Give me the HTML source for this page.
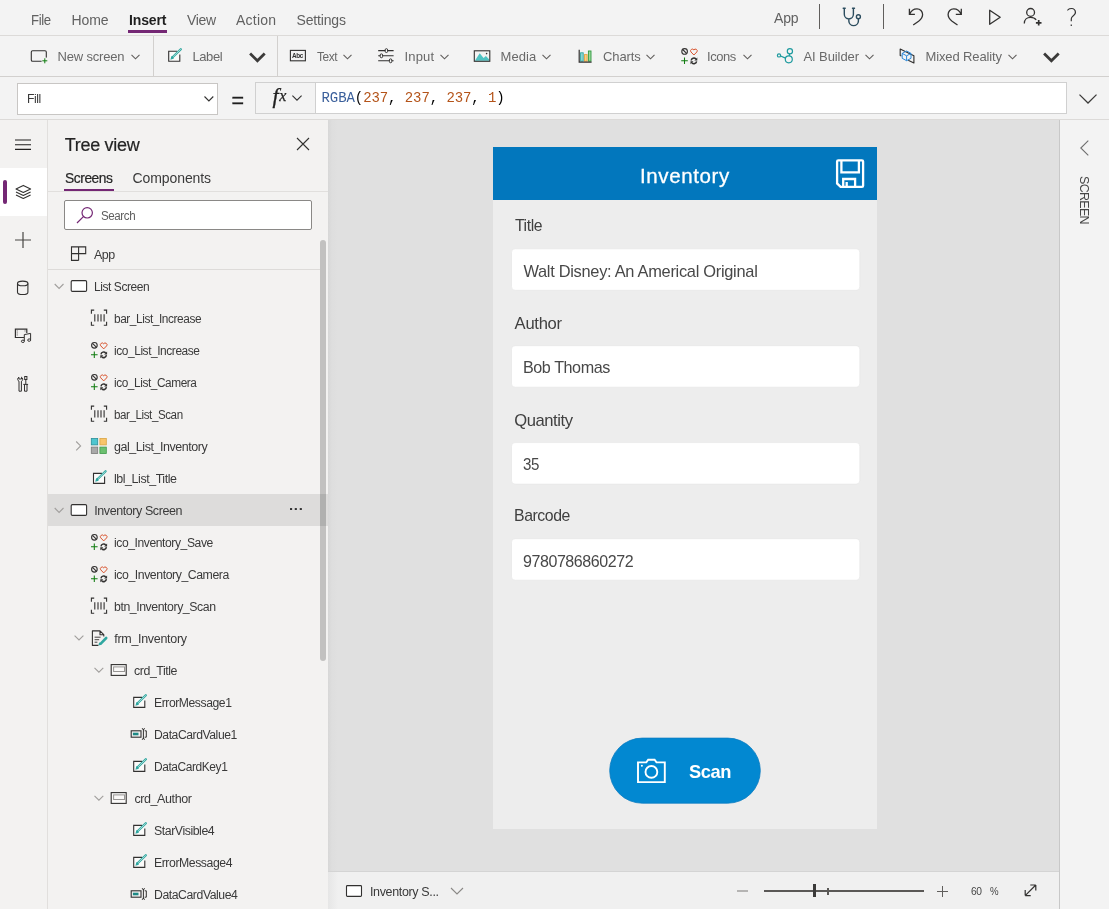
<!DOCTYPE html>
<html lang="en"><head><meta charset="utf-8"><title>Power Apps - Inventory</title>
<style>
html,body{margin:0;padding:0;}
body{width:1109px;height:909px;overflow:hidden;position:relative;background:#f3f2f1;font-family:"Liberation Sans",sans-serif;}
.t{position:absolute;white-space:nowrap;line-height:20px;filter:grayscale(1);}
.tc{filter:contrast(1.001);}
#txt{position:absolute;left:0;top:0;width:1109px;height:909px;}
.r{position:absolute;box-sizing:border-box;}
svg{overflow:visible;}
</style></head>
<body>
<div class="r" style="left:0px;top:0px;width:1109px;height:120px;background:#f3f3f3;"></div>
<div class="r" style="left:0px;top:35px;width:1109px;height:1px;background:#dcdad8;"></div>
<div class="r" style="left:0px;top:76px;width:1109px;height:1px;background:#d2d0ce;"></div>
<div class="r" style="left:0px;top:119px;width:1109px;height:1px;background:#dcdad8;"></div>
<div class="r" style="left:328px;top:120px;width:731px;height:752px;background:#e0e0e0;"></div>
<div class="r" style="left:328px;top:120px;width:10px;height:752px;background:linear-gradient(90deg,#d7d7d7,#dedede 40%,#e0e0e0);"></div>
<div class="r" style="left:1059px;top:120px;width:50px;height:789px;background:#f3f3f3;border-left:1px solid #c8c8c8;"></div>
<div class="r" style="left:328px;top:871px;width:731px;height:38px;background:#f0f0f0;border-top:1px solid #d4d4d4;"></div>
<div class="r" style="left:328px;top:872px;width:10px;height:37px;background:linear-gradient(90deg,#e6e6e6,#f0f0f0);"></div>
<div class="r" style="left:0px;top:120px;width:48px;height:789px;background:#f3f2f1;border-right:1px solid #e1dfdd;"></div>
<div class="r" style="left:48px;top:120px;width:280px;height:789px;background:#f3f2f1;"></div>
<span class="t" id="t1" style="left:30.50px;top:9.85px;font-size:14px;color:#63615f;letter-spacing:-0.450px;transform:scaleX(0.9428);transform-origin:0 50%;">File</span>
<span class="t" id="t2" style="left:71.50px;top:9.85px;font-size:14px;color:#63615f;letter-spacing:-0.120px;">Home</span>
<span class="t" id="t3" style="left:129.00px;top:9.85px;font-size:14px;color:#201f1e;font-weight:700;letter-spacing:-0.125px;">Insert</span>
<span class="t" id="t4" style="left:187.00px;top:9.85px;font-size:14px;color:#63615f;letter-spacing:-0.365px;">View</span>
<span class="t" id="t5" style="left:236.00px;top:9.85px;font-size:14px;color:#63615f;letter-spacing:0.216px;">Action</span>
<span class="t" id="t6" style="left:296.50px;top:9.85px;font-size:14px;color:#63615f;letter-spacing:-0.156px;">Settings</span>
<div class="r" style="left:128px;top:30px;width:39px;height:3px;background:#742774;"></div>
<span class="t" id="t7" style="left:774.00px;top:8.05px;font-size:14px;color:#63615f;letter-spacing:-0.211px;">App</span>
<span class="t" id="t8" style="left:1065.60px;top:7.70px;font-size:24px;color:#323130;font-weight:200;font-family:'DejaVu Sans', sans-serif;">?</span>
<span class="t" id="t9" style="left:292.30px;top:45.97px;font-size:7px;color:#323130;font-weight:700;letter-spacing:-0.450px;transform:scaleX(0.9080);transform-origin:0 50%;">Abc</span>
<div class="r" style="left:819px;top:4px;width:1px;height:25px;background:#605e5c;"></div>
<div class="r" style="left:883px;top:4px;width:1px;height:25px;background:#605e5c;"></div>
<span class="t" id="t10" style="left:57.60px;top:46.50px;font-size:13px;color:#6b6967;letter-spacing:-0.182px;">New screen</span>
<svg class="r" style="left:130.5px;top:54px;" width="9" height="6" viewBox="0 0 9 6" fill="none"><path d="M0.5 0.8 L4.5 4.8 L8.5 0.8" stroke="#605e5c" stroke-width="1.1"/></svg>
<span class="t" id="t11" style="left:192.40px;top:46.50px;font-size:13px;color:#6b6967;letter-spacing:-0.378px;">Label</span>
<span class="t" id="t12" style="left:317.00px;top:46.50px;font-size:13px;color:#6b6967;letter-spacing:-0.450px;transform:scaleX(0.9158);transform-origin:0 50%;">Text</span>
<svg class="r" style="left:343.3px;top:54px;" width="9" height="6" viewBox="0 0 9 6" fill="none"><path d="M0.5 0.8 L4.5 4.8 L8.5 0.8" stroke="#605e5c" stroke-width="1.1"/></svg>
<span class="t" id="t13" style="left:404.50px;top:46.50px;font-size:13px;color:#6b6967;letter-spacing:0.145px;">Input</span>
<svg class="r" style="left:439.8px;top:54px;" width="9" height="6" viewBox="0 0 9 6" fill="none"><path d="M0.5 0.8 L4.5 4.8 L8.5 0.8" stroke="#605e5c" stroke-width="1.1"/></svg>
<span class="t" id="t14" style="left:500.50px;top:46.50px;font-size:13px;color:#6b6967;letter-spacing:0.095px;">Media</span>
<svg class="r" style="left:542.3px;top:54px;" width="9" height="6" viewBox="0 0 9 6" fill="none"><path d="M0.5 0.8 L4.5 4.8 L8.5 0.8" stroke="#605e5c" stroke-width="1.1"/></svg>
<span class="t" id="t15" style="left:603.00px;top:46.50px;font-size:13px;color:#6b6967;letter-spacing:-0.119px;">Charts</span>
<svg class="r" style="left:646.3px;top:54px;" width="9" height="6" viewBox="0 0 9 6" fill="none"><path d="M0.5 0.8 L4.5 4.8 L8.5 0.8" stroke="#605e5c" stroke-width="1.1"/></svg>
<span class="t" id="t16" style="left:707.30px;top:46.50px;font-size:13px;color:#6b6967;letter-spacing:-0.450px;transform:scaleX(0.9973);transform-origin:0 50%;">Icons</span>
<svg class="r" style="left:742.8px;top:54px;" width="9" height="6" viewBox="0 0 9 6" fill="none"><path d="M0.5 0.8 L4.5 4.8 L8.5 0.8" stroke="#605e5c" stroke-width="1.1"/></svg>
<span class="t" id="t17" style="left:803.50px;top:46.50px;font-size:13px;color:#6b6967;letter-spacing:-0.097px;">AI Builder</span>
<svg class="r" style="left:864.5px;top:54px;" width="9" height="6" viewBox="0 0 9 6" fill="none"><path d="M0.5 0.8 L4.5 4.8 L8.5 0.8" stroke="#605e5c" stroke-width="1.1"/></svg>
<span class="t" id="t18" style="left:925.50px;top:46.50px;font-size:13px;color:#6b6967;letter-spacing:-0.128px;">Mixed Reality</span>
<svg class="r" style="left:1007.5px;top:54px;" width="9" height="6" viewBox="0 0 9 6" fill="none"><path d="M0.5 0.8 L4.5 4.8 L8.5 0.8" stroke="#605e5c" stroke-width="1.1"/></svg>
<div class="r" style="left:153px;top:36px;width:1px;height:40px;background:#d2d0ce;"></div>
<div class="r" style="left:277px;top:36px;width:1px;height:40px;background:#d2d0ce;"></div>
<svg class="r" style="left:248.5px;top:51.5px;" width="17" height="11" viewBox="0 0 17 11" fill="none"><path d="M1.1 1.6 L8.4 8.7 L15.7 1.6" stroke="#3b3a39" stroke-width="2.8"/></svg>
<svg class="r" style="left:1042.6px;top:51.5px;" width="17" height="11" viewBox="0 0 17 11" fill="none"><path d="M1.1 1.6 L8.4 8.7 L15.7 1.6" stroke="#3b3a39" stroke-width="2.8"/></svg>
<div class="r" style="left:17px;top:83px;width:201px;height:32px;background:#fff;border:1px solid #c8c6c4;"></div>
<span class="t" id="t19" style="left:26.60px;top:89.30px;font-size:13px;color:#3b3a39;letter-spacing:-0.450px;transform:scaleX(0.9371);transform-origin:0 50%;">Fill</span>
<svg class="r" style="left:204px;top:96px;" width="10" height="6" viewBox="0 0 10 6" fill="none"><path d="M0.5 0.5 L4.9 4.9 L9.3 0.5" stroke="#323130" stroke-width="1.1"/></svg>
<span class="t" id="t20" style="left:231.50px;top:90.75px;font-size:21.5px;color:#201f1e;-webkit-text-stroke:0.3px #201f1e;">=</span>
<div class="r" style="left:255px;top:82px;width:61px;height:32px;background:#f3f3f3;border:1px solid #d0d0d0;"></div>
<span class="t" style="left:272.6px;top:85.58px;font-size:22px;color:#201f1e;font-family:'Liberation Serif',serif;font-style:italic;-webkit-text-stroke:0.35px #201f1e;">f<span style="font-size:16px;position:relative;top:-1.5px;margin-left:0.6px;-webkit-text-stroke:0.25px #201f1e;">x</span></span>
<svg class="r" style="left:292px;top:95.4px;" width="10" height="6" viewBox="0 0 10 6" fill="none"><path d="M0.4 0.6 L5 5.2 L9.6 0.6" stroke="#323130" stroke-width="1.1"/></svg>
<div class="r" style="left:315px;top:82px;width:752px;height:32px;background:#fff;border:1px solid #d0d0d0;"></div>
<span class="t tc" style="left:321.5px;top:88.2px;font-size:14px;font-family:'Liberation Mono',monospace;letter-spacing:-0.08px;color:#000"><span style="color:#3a5f9b">RGBA</span>(<span style="color:#b4541a">237</span>, <span style="color:#b4541a">237</span>, <span style="color:#b4541a">237</span>, <span style="color:#b4541a">1</span>)</span>
<svg class="r" style="left:1079px;top:93.5px;" width="18" height="10" viewBox="0 0 18 10" fill="none"><path d="M0.5 0.6 L9 9 L17.5 0.6" stroke="#3b3a39" stroke-width="1.25"/></svg>
<div class="r" style="left:0px;top:168px;width:47px;height:48px;background:#fff;"></div>
<div class="r" style="left:3px;top:180px;width:4px;height:24px;background:#742774;border-radius:2px;"></div>
<svg class="r" style="left:15px;top:139px;" width="16" height="12" viewBox="0 0 16 12" fill="none"><path d="M0 1H16M0 5.7H16M0 10.4H16" stroke="#201f1e" stroke-width="1.1"/></svg>
<svg class="r" style="left:15px;top:232px;" width="16" height="16" viewBox="0 0 16 16" fill="none"><path d="M8 0V16M0 8H16" stroke="#484644" stroke-width="1.2"/></svg>
<span class="t" id="t21" style="left:64.70px;top:135.06px;font-size:18px;color:#252423;letter-spacing:-0.295px;-webkit-text-stroke:0.2px #252423;">Tree view</span>
<svg class="r" style="left:297px;top:138px;" width="12" height="12" viewBox="0 0 12 12" fill="none"><path d="M0 0L12 12M12 0L0 12" stroke="#323130" stroke-width="1.1"/></svg>
<span class="t" id="t22" style="left:64.70px;top:168.45px;font-size:14px;color:#252423;letter-spacing:-0.450px;transform:scaleX(0.9864);transform-origin:0 50%;-webkit-text-stroke:0.2px #252423;">Screens</span>
<span class="t" id="t23" style="left:132.50px;top:168.45px;font-size:14px;color:#3b3a39;letter-spacing:-0.088px;">Components</span>
<div class="r" style="left:48px;top:191px;width:280px;height:1px;background:#e1dfdd;"></div>
<div class="r" style="left:64px;top:189px;width:50px;height:2px;background:#742774;"></div>
<div class="r" style="left:64px;top:200px;width:248px;height:30px;background:#fff;border:1px solid #8a8886;border-radius:2px;"></div>
<svg class="r" style="left:76px;top:206px;" width="18" height="18" viewBox="0 0 18 18" fill="none"><circle cx="11.2" cy="6.8" r="5.2" stroke="#742774" stroke-width="1.2"/><path d="M7.4 10.6 L1 17" stroke="#742774" stroke-width="1.2"/></svg>
<span class="t" id="t24" style="left:101.00px;top:206.17px;font-size:12.5px;color:#605e5c;letter-spacing:-0.450px;transform:scaleX(0.9261);transform-origin:0 50%;">Search</span>
<div class="r" style="left:48px;top:269px;width:272px;height:1px;background:#dddbd9;"></div>
<div class="r" style="left:48px;top:494px;width:280px;height:32px;background:#dddcdb;"></div>
<div class="r" style="left:320px;top:240px;width:6px;height:421px;background:rgba(0,0,0,0.2);border-radius:3px;"></div>
<span class="t" id="t25" style="left:94.30px;top:245.27px;font-size:12.5px;color:#3b3a39;letter-spacing:-0.450px;transform:scaleX(0.9977);transform-origin:0 50%;">App</span>
<span class="t" id="t26" style="left:94.30px;top:277.27px;font-size:12.5px;color:#3b3a39;letter-spacing:-0.450px;transform:scaleX(0.9598);transform-origin:0 50%;">List Screen</span>
<span class="t" id="t27" style="left:114.30px;top:309.27px;font-size:12.5px;color:#3b3a39;letter-spacing:-0.450px;transform:scaleX(0.9493);transform-origin:0 50%;">bar_List_Increase</span>
<span class="t" id="t28" style="left:114.30px;top:341.27px;font-size:12.5px;color:#3b3a39;letter-spacing:-0.450px;transform:scaleX(0.9547);transform-origin:0 50%;">ico_List_Increase</span>
<span class="t" id="t29" style="left:114.30px;top:373.27px;font-size:12.5px;color:#3b3a39;letter-spacing:-0.450px;transform:scaleX(0.9475);transform-origin:0 50%;">ico_List_Camera</span>
<span class="t" id="t30" style="left:114.30px;top:405.27px;font-size:12.5px;color:#3b3a39;letter-spacing:-0.450px;transform:scaleX(0.9272);transform-origin:0 50%;">bar_List_Scan</span>
<span class="t" id="t31" style="left:114.30px;top:437.27px;font-size:12.5px;color:#3b3a39;letter-spacing:-0.450px;transform:scaleX(0.9989);transform-origin:0 50%;">gal_List_Inventory</span>
<span class="t" id="t32" style="left:114.30px;top:469.27px;font-size:12.5px;color:#3b3a39;letter-spacing:-0.450px;transform:scaleX(0.9958);transform-origin:0 50%;">lbl_List_Title</span>
<span class="t" id="t33" style="left:94.30px;top:501.27px;font-size:12.5px;color:#3b3a39;letter-spacing:-0.427px;">Inventory Screen</span>
<span class="t" id="t34" style="left:114.30px;top:533.27px;font-size:12.5px;color:#3b3a39;letter-spacing:-0.450px;transform:scaleX(0.9721);transform-origin:0 50%;">ico_Inventory_Save</span>
<span class="t" id="t35" style="left:114.30px;top:565.27px;font-size:12.5px;color:#3b3a39;letter-spacing:-0.450px;transform:scaleX(0.9837);transform-origin:0 50%;">ico_Inventory_Camera</span>
<span class="t" id="t36" style="left:114.30px;top:597.27px;font-size:12.5px;color:#3b3a39;letter-spacing:-0.450px;transform:scaleX(0.9850);transform-origin:0 50%;">btn_Inventory_Scan</span>
<span class="t" id="t37" style="left:114.30px;top:629.27px;font-size:12.5px;color:#3b3a39;letter-spacing:-0.310px;">frm_Inventory</span>
<span class="t" id="t38" style="left:134.40px;top:661.27px;font-size:12.5px;color:#3b3a39;letter-spacing:-0.450px;transform:scaleX(0.9916);transform-origin:0 50%;">crd_Title</span>
<span class="t" id="t39" style="left:154.20px;top:693.27px;font-size:12.5px;color:#3b3a39;letter-spacing:-0.450px;transform:scaleX(0.9731);transform-origin:0 50%;">ErrorMessage1</span>
<span class="t" id="t40" style="left:154.20px;top:725.27px;font-size:12.5px;color:#3b3a39;letter-spacing:-0.450px;transform:scaleX(0.9726);transform-origin:0 50%;">DataCardValue1</span>
<span class="t" id="t41" style="left:154.20px;top:757.27px;font-size:12.5px;color:#3b3a39;letter-spacing:-0.450px;transform:scaleX(0.9578);transform-origin:0 50%;">DataCardKey1</span>
<span class="t" id="t42" style="left:134.40px;top:789.27px;font-size:12.5px;color:#3b3a39;letter-spacing:-0.406px;">crd_Author</span>
<span class="t" id="t43" style="left:154.20px;top:821.27px;font-size:12.5px;color:#3b3a39;letter-spacing:-0.450px;transform:scaleX(0.9864);transform-origin:0 50%;">StarVisible4</span>
<span class="t" id="t44" style="left:154.20px;top:853.27px;font-size:12.5px;color:#3b3a39;letter-spacing:-0.450px;transform:scaleX(0.9806);transform-origin:0 50%;">ErrorMessage4</span>
<span class="t" id="t45" style="left:154.20px;top:885.27px;font-size:12.5px;color:#3b3a39;letter-spacing:-0.450px;transform:scaleX(0.9796);transform-origin:0 50%;">DataCardValue4</span>
<span class="t" id="t46" style="left:289.20px;top:495.50px;font-size:13px;color:#323130;font-weight:700;letter-spacing:0.600px;transform:scaleX(1.1458);transform-origin:0 50%;">...</span>
<div class="r" style="left:493px;top:147px;width:384px;height:682px;background:#ededed;"></div>
<div class="r" style="left:493px;top:147px;width:384px;height:53px;background:#0277bd;"></div>
<span class="t" id="t47" style="left:640.20px;top:165.50px;font-size:20.5px;color:#fff;letter-spacing:0.600px;transform:scaleX(1.0008);transform-origin:0 50%;-webkit-text-stroke:0.3px #fff;">Inventory</span>
<span class="t" id="t48" style="left:514.60px;top:216.35px;font-size:16.6px;color:#404040;letter-spacing:-0.450px;transform:scaleX(0.9504);transform-origin:0 50%;">Title</span>
<svg class="r" style="left:0px;top:0px;" width="1109" height="909" viewBox="0 0 1109 909" fill="none"><rect x="511.5" y="248.8" width="348.3" height="41.5" rx="3.6" fill="#fff" stroke="#e4e4e4" stroke-width="0.6"/></svg>
<span class="t" id="t49" style="left:523.40px;top:261.02px;font-size:16.4px;color:#484848;letter-spacing:-0.285px;">Walt Disney: An Americal Original</span>
<span class="t" id="t50" style="left:514.60px;top:313.65px;font-size:16.6px;color:#404040;letter-spacing:-0.278px;">Author</span>
<svg class="r" style="left:0px;top:0px;" width="1109" height="909" viewBox="0 0 1109 909" fill="none"><rect x="511.5" y="345.7" width="348.3" height="41.5" rx="3.6" fill="#fff" stroke="#e4e4e4" stroke-width="0.6"/></svg>
<span class="t" id="t51" style="left:522.60px;top:357.22px;font-size:16.4px;color:#484848;letter-spacing:-0.450px;transform:scaleX(0.9854);transform-origin:0 50%;">Bob Thomas</span>
<span class="t" id="t52" style="left:514.20px;top:410.55px;font-size:16.6px;color:#404040;letter-spacing:-0.430px;">Quantity</span>
<svg class="r" style="left:0px;top:0px;" width="1109" height="909" viewBox="0 0 1109 909" fill="none"><rect x="511.5" y="442.6" width="348.3" height="41.5" rx="3.6" fill="#fff" stroke="#e4e4e4" stroke-width="0.6"/></svg>
<span class="t" id="t53" style="left:522.60px;top:454.02px;font-size:16.4px;color:#484848;letter-spacing:-0.450px;transform:scaleX(0.9222);transform-origin:0 50%;">35</span>
<span class="t" id="t54" style="left:513.80px;top:506.35px;font-size:16.6px;color:#404040;letter-spacing:-0.450px;transform:scaleX(0.9541);transform-origin:0 50%;">Barcode</span>
<svg class="r" style="left:0px;top:0px;" width="1109" height="909" viewBox="0 0 1109 909" fill="none"><rect x="511.5" y="538.7" width="348.3" height="41.5" rx="3.6" fill="#fff" stroke="#e4e4e4" stroke-width="0.6"/></svg>
<span class="t" id="t55" style="left:522.80px;top:551.02px;font-size:16.4px;color:#484848;letter-spacing:-0.450px;transform:scaleX(0.9778);transform-origin:0 50%;">9780786860272</span>
<svg class="r" style="left:0px;top:0px;" width="1109" height="909" viewBox="0 0 1109 909" fill="none"><rect x="609.7" y="738.1" width="150.6" height="65.1" rx="32.55" fill="#0288d1" stroke="#0b7cc2" stroke-width="0.8"/></svg>
<span class="t" id="t56" style="left:688.60px;top:762.29px;font-size:18.5px;color:#fff;font-weight:700;letter-spacing:-0.450px;transform:scaleX(0.9891);transform-origin:0 50%;">Scan</span>
<span class="t" id="t57" style="left:370.00px;top:881.67px;font-size:12.5px;color:#3b3a39;letter-spacing:-0.358px;">Inventory S...</span>
<span class="t" id="t58" style="left:970.50px;top:880.99px;font-size:11px;color:#484644;letter-spacing:-0.450px;transform:scaleX(0.9322);transform-origin:0 50%;">60</span>
<span class="t" id="t59" style="left:990.40px;top:880.99px;font-size:11px;color:#484644;transform:scaleX(0.8792);transform-origin:0 50%;">%</span>
<div class="r" style="left:763.5px;top:890px;width:160.5px;height:2px;background:#5a5856;"></div>
<div class="r" style="left:813px;top:884px;width:3px;height:13px;background:#3b3a39;"></div>
<div class="r" style="left:827px;top:887.5px;width:2px;height:7px;background:#5a5856;"></div>
<svg class="r" style="left:737px;top:890px;" width="11" height="2" viewBox="0 0 11 2" fill="none"><path d="M0 1H11" stroke="#7a7876" stroke-width="1"/></svg>
<svg class="r" style="left:937px;top:885.5px;" width="11" height="11" viewBox="0 0 11 11" fill="none"><path d="M5.5 0V11M0 5.5H11" stroke="#605e5c" stroke-width="1"/></svg>
<svg class="r" style="left:1080px;top:140px;" width="9" height="16" viewBox="0 0 9 16" fill="none"><path d="M8.3 0.6 L0.8 8 L8.3 15.4" stroke="#6e6e6e" stroke-width="1.1"/></svg>
<span class="t" style="left:1074px;top:176px;width:20px;height:50px;font-size:12.5px;letter-spacing:-0.7px;color:#484644;writing-mode:vertical-rl;line-height:20px;">SCREEN</span>
<svg class="r" style="left:0;top:0" width="1109" height="909" viewBox="0 0 1109 909" fill="none"><g stroke="#2b4c5e" stroke-width="1.4" fill="none" transform="translate(842,7)" stroke-linecap="round"><path d="M2.3 1.3V7.3A4.55 4.55 0 0 0 11.4 7.3V1.3M6.85 11.9V14.1A4.78 4.78 0 0 0 16.4 14.1V11.7M1.2 1.3H3.2M10.5 1.3H12.5"/><circle cx="16.4" cy="9.7" r="2"/></g><g stroke="#323130" stroke-width="1.3" fill="none" transform="translate(906,7)"><path d="M3.4 1.8V7.3H8.9M3.7 7.1C5 3.8 8.2 1.8 11 1.8C14.2 1.8 16.6 4.4 16.6 7.6C16.6 10.5 14.8 12.6 12.6 14.3L7.2 18"/></g><g stroke="#323130" stroke-width="1.3" fill="none" transform="translate(964.7,7) scale(-1,1)"><path d="M3.4 1.8V7.3H8.9M3.7 7.1C5 3.8 8.2 1.8 11 1.8C14.2 1.8 16.6 4.4 16.6 7.6C16.6 10.5 14.8 12.6 12.6 14.3L7.2 18"/></g><g stroke="#323130" stroke-width="1.3" fill="none" stroke-linejoin="round"><path d="M989.7 10.3V24.3L1000.2 17.3Z"/></g><g stroke="#323130" stroke-width="1.3" fill="none" ><circle cx="1030.6" cy="12.4" r="3.9"/><path d="M1024.3 23.4C1024.3 19.6 1027 17.3 1030.6 17.3C1033 17.3 1035 18.3 1036.2 19.9"/></g><g stroke="#323130" stroke-width="1.7" fill="none" ><path d="M1038.7 20V25.6M1035.9 22.8H1041.5"/></g><g stroke="#323130" stroke-width="1.1" fill="none" ><rect x="31.3" y="50.8" width="15" height="10.4" rx="1.3"/></g><rect x="41.6" y="57.6" width="6.5" height="6" fill="#f3f3f3"/><g stroke="#107c10" stroke-width="1" fill="none" ><path d="M44.8 58.3V63.3M42.3 60.8H47.3"/></g><path d="M177.2 51.3H168.7V61.3H179.79999999999998V54.4" fill="#fbfbfa" stroke="#323130" stroke-width="1.1"/><g stroke="#2fa7a0" stroke-width="2.3" fill="none" stroke-linecap="round"><path d="M180.79999999999998 49.199999999999996L172.6 57.199999999999996"/></g><g stroke="#d4f0ec" stroke-width="0.7" fill="none" stroke-linecap="round"><path d="M180.5 49.5L173.39999999999998 56.4"/></g><path d="M170.39999999999998 59.699999999999996L171.39999999999998 56.0L174.0 58.599999999999994Z" fill="#2fa7a0"/><g stroke="#323130" stroke-width="1.1" fill="none" ><rect x="290.4" y="50.4" width="15" height="10.4"/></g><g stroke="#323130" stroke-width="1.1" fill="none" ><path d="M378.2 50.6H393.6M378.2 55.8H393.6M378.2 60.8H393.6"/></g><rect x="385.2" y="48.7" width="2.4" height="3.8" rx="1.1" fill="#f3f3f3" stroke="#323130" stroke-width="1"/><rect x="380.2" y="53.9" width="2.4" height="3.8" rx="1.1" fill="#f3f3f3" stroke="#323130" stroke-width="1"/><rect x="389.40000000000003" y="58.9" width="2.4" height="3.8" rx="1.1" fill="#f3f3f3" stroke="#323130" stroke-width="1"/><path d="M474.9 60.8L479.7 53.2L483.6 57.9L485.9 55.9L489.3 59.4V60.8Z" fill="#4fc3c3"/><g stroke="#323130" stroke-width="1.1" fill="none" ><rect x="474.3" y="50.8" width="15.5" height="10.5"/></g><circle cx="486.6" cy="53.6" r="0.8" fill="#323130"/><rect x="580.6" y="52.8" width="2.6" height="8.4" fill="#8fd8d4" stroke="#2fa7a0" stroke-width="0.9"/><rect x="584.5" y="54.6" width="2.6" height="6.6" fill="#f8cf85" stroke="#e8a33c" stroke-width="0.9"/><rect x="588.4" y="51" width="2.6" height="10.2" fill="#9bd69b" stroke="#2e9a3e" stroke-width="0.9"/><g stroke="#323130" stroke-width="1.2" fill="none" ><path d="M579.2 49.7V62.1H591.6"/></g><g stroke="#323130" stroke-width="1.1" fill="none" ><circle cx="684.6" cy="51.4" r="2.8"/><path d="M682.7 49.5L686.5 53.3"/></g><g stroke="#d8502a" stroke-width="1" fill="none" stroke-linejoin="round"><path d="M693.9 55.0L690.9 51.9A1.75 1.75 0 0 1 693.9 49.9A1.75 1.75 0 0 1 696.9 51.9Z"/></g><g stroke="#107c10" stroke-width="1.05" fill="none" ><path d="M684.5 57.5V64.1M681.2 60.8H687.8"/></g><g stroke="#323130" stroke-width="1.5" fill="none" ><path d="M691.1999999999999 60.5A2.7 2.7 0 0 1 695.9 59.0M696.6 61.3A2.7 2.7 0 0 1 691.9 62.8"/></g><path d="M697.3 57.5V60.5H694.3ZM690.5 64.3V61.3H693.5Z" fill="#323130"/><g stroke="#1d9a9e" stroke-width="1.2" fill="none" ><circle cx="779" cy="55.4" r="1.6"/><circle cx="789.9" cy="51.2" r="2.6"/><circle cx="788.8" cy="59.3" r="3.5"/><path d="M780.6 56L785.5 58.1M789.6 53.8L789.3 55.8"/></g><g stroke="#323130" stroke-width="1.15" fill="none" stroke-linejoin="round"><path d="M901.4 56.1L900.2 55.5V49L913.9 55.8V63L908.2 60.2"/></g><g stroke="#2b88d8" stroke-width="1" fill="none" stroke-linejoin="round"><path d="M906.6 51L911 53.4V58.3L906.6 60.7L902.2 58.3V53.4ZM902.2 53.4L906.6 55.8L911 53.4M906.6 55.8V60.7"/></g><g stroke="#323130" stroke-width="1.1" fill="none" stroke-linejoin="round"><path d="M23.3 185.4L30.6 188.9L23.3 192.4L16 188.9ZM16 191.9L23.3 195.4L30.6 191.9M16 194.9L23.3 198.4L30.6 194.9"/></g><g stroke="#323130" stroke-width="1.1" fill="none" ><ellipse cx="22.7" cy="283.4" rx="5.2" ry="2.3"/><path d="M17.5 283.4V292.2A5.2 2.3 0 0 0 27.9 292.2V283.4"/></g><g stroke="#323130" stroke-width="1.2" fill="none" ><path d="M24 337.5H15.4V329.2H26.8V333"/></g><g stroke="#323130" stroke-width="0.9" fill="none" stroke-dasharray="0.9 1.1"><path d="M17.2 330.5V336.5M25 330.5V332.6"/></g><g stroke="#323130" stroke-width="1" fill="none" ><path d="M24.3 341V334.6L30.6 333.4V339.8"/></g><g stroke="#323130" stroke-width="1" fill="none" ><ellipse cx="22.9" cy="341.3" rx="1.5" ry="1.2"/><ellipse cx="29.2" cy="340.1" rx="1.5" ry="1.2"/></g><g stroke="#323130" stroke-width="1" fill="none" ><path d="M19 381.2V391.2H21.4V381.2M19 381.3A2.3 2.3 0 0 1 18.9 377.2V379H21.5V377.2A2.3 2.3 0 0 1 21.4 381.3"/></g><g stroke="#323130" stroke-width="1" fill="none" ><rect x="24.7" y="376.5" width="2.2" height="3"/><path d="M25.8 379.5V384.4M23.3 384.4H28.1M24.5 384.6V391.2H27V384.6"/></g><g stroke="#323130" stroke-width="1.1" fill="none" ><path d="M71.5 246.9H85.7V253.6H71.5ZM78.6 246.9V260.4M71.5 253.6V260.4H78.6"/></g><g stroke="#a19f9d" stroke-width="1.1" fill="none" ><path d="M54.7 284L59.1 288.4L63.5 284"/></g><rect x="71.2" y="280.6" width="15.4" height="10.8" rx="1.2" fill="#fff" stroke="#323130" stroke-width="1.1"/><g stroke="#323130" stroke-width="1.1" fill="none" ><path d="M94.2 310.09999999999997H91.39999999999999V313.7M91.39999999999999 321.7V325.3H94.2M103.79999999999998 310.09999999999997H106.6V313.7M106.6 321.7V325.3H103.79999999999998"/></g><g stroke="#323130" stroke-width="1.1" fill="none" ><path d="M94.8 314.2V321.4M98.0 314.2V321.4M101.0 314.2V321.4M104.1 314.2V321.4"/></g><g stroke="#323130" stroke-width="1.1" fill="none" ><circle cx="94.39999999999999" cy="345.3" r="2.8"/><path d="M92.5 343.40000000000003L96.3 347.2"/></g><g stroke="#d8502a" stroke-width="1" fill="none" stroke-linejoin="round"><path d="M103.7 348.9L100.7 345.8A1.75 1.75 0 0 1 103.7 343.8A1.75 1.75 0 0 1 106.7 345.8Z"/></g><g stroke="#107c10" stroke-width="1.05" fill="none" ><path d="M94.3 351.40000000000003V358.0M91.0 354.7H97.6"/></g><g stroke="#323130" stroke-width="1.5" fill="none" ><path d="M101.0 354.40000000000003A2.7 2.7 0 0 1 105.7 352.90000000000003M106.4 355.2A2.7 2.7 0 0 1 101.7 356.7"/></g><path d="M107.10000000000001 351.40000000000003V354.40000000000003H104.10000000000001ZM100.3 358.2V355.2H103.3Z" fill="#323130"/><g stroke="#323130" stroke-width="1.1" fill="none" ><circle cx="94.39999999999999" cy="377.3" r="2.8"/><path d="M92.5 375.40000000000003L96.3 379.2"/></g><g stroke="#d8502a" stroke-width="1" fill="none" stroke-linejoin="round"><path d="M103.7 380.9L100.7 377.8A1.75 1.75 0 0 1 103.7 375.8A1.75 1.75 0 0 1 106.7 377.8Z"/></g><g stroke="#107c10" stroke-width="1.05" fill="none" ><path d="M94.3 383.40000000000003V390.0M91.0 386.7H97.6"/></g><g stroke="#323130" stroke-width="1.5" fill="none" ><path d="M101.0 386.40000000000003A2.7 2.7 0 0 1 105.7 384.90000000000003M106.4 387.2A2.7 2.7 0 0 1 101.7 388.7"/></g><path d="M107.10000000000001 383.40000000000003V386.40000000000003H104.10000000000001ZM100.3 390.2V387.2H103.3Z" fill="#323130"/><g stroke="#323130" stroke-width="1.1" fill="none" ><path d="M94.2 406.09999999999997H91.39999999999999V409.7M91.39999999999999 417.7V421.3H94.2M103.79999999999998 406.09999999999997H106.6V409.7M106.6 417.7V421.3H103.79999999999998"/></g><g stroke="#323130" stroke-width="1.1" fill="none" ><path d="M94.8 410.2V417.4M98.0 410.2V417.4M101.0 410.2V417.4M104.1 410.2V417.4"/></g><g stroke="#a19f9d" stroke-width="1.1" fill="none" ><path d="M76.2 441.5L80.60000000000001 445.9L76.2 450.3"/></g><rect x="91.3" y="438.5" width="6.4" height="6.4" fill="#4fc6cf" stroke="#2c8f98" stroke-width="0.8"/><rect x="99.89999999999999" y="438.5" width="6.4" height="6.4" fill="#f9c56a" stroke="#d9a441" stroke-width="0.8"/><rect x="91.3" y="447.1" width="6.4" height="6.4" fill="#a9a9a9" stroke="#7a7a7a" stroke-width="0.8"/><rect x="99.89999999999999" y="447.1" width="6.4" height="6.4" fill="#6cc070" stroke="#3f9a49" stroke-width="0.8"/><path d="M102.0 473.4H93.5V483.4H104.6V476.5" fill="#fbfbfa" stroke="#323130" stroke-width="1.1"/><g stroke="#2fa7a0" stroke-width="2.3" fill="none" stroke-linecap="round"><path d="M105.6 471.29999999999995L97.4 479.29999999999995"/></g><g stroke="#d4f0ec" stroke-width="0.7" fill="none" stroke-linecap="round"><path d="M105.3 471.59999999999997L98.2 478.5"/></g><path d="M95.2 481.79999999999995L96.2 478.09999999999997L98.8 480.7Z" fill="#2fa7a0"/><g stroke="#a19f9d" stroke-width="1.1" fill="none" ><path d="M54.7 508L59.1 512.4L63.5 508"/></g><rect x="71.2" y="504.6" width="15.4" height="10.8" rx="1.2" fill="#fff" stroke="#323130" stroke-width="1.1"/><g stroke="#323130" stroke-width="1.1" fill="none" ><circle cx="94.39999999999999" cy="537.3" r="2.8"/><path d="M92.5 535.4L96.3 539.1999999999999"/></g><g stroke="#d8502a" stroke-width="1" fill="none" stroke-linejoin="round"><path d="M103.7 540.9L100.7 537.8A1.75 1.75 0 0 1 103.7 535.8A1.75 1.75 0 0 1 106.7 537.8Z"/></g><g stroke="#107c10" stroke-width="1.05" fill="none" ><path d="M94.3 543.4V550.0M91.0 546.6999999999999H97.6"/></g><g stroke="#323130" stroke-width="1.5" fill="none" ><path d="M101.0 546.4A2.7 2.7 0 0 1 105.7 544.9M106.4 547.1999999999999A2.7 2.7 0 0 1 101.7 548.6999999999999"/></g><path d="M107.10000000000001 543.4V546.4H104.10000000000001ZM100.3 550.1999999999999V547.1999999999999H103.3Z" fill="#323130"/><g stroke="#323130" stroke-width="1.1" fill="none" ><circle cx="94.39999999999999" cy="569.3" r="2.8"/><path d="M92.5 567.4L96.3 571.1999999999999"/></g><g stroke="#d8502a" stroke-width="1" fill="none" stroke-linejoin="round"><path d="M103.7 572.9L100.7 569.8A1.75 1.75 0 0 1 103.7 567.8A1.75 1.75 0 0 1 106.7 569.8Z"/></g><g stroke="#107c10" stroke-width="1.05" fill="none" ><path d="M94.3 575.4V582.0M91.0 578.6999999999999H97.6"/></g><g stroke="#323130" stroke-width="1.5" fill="none" ><path d="M101.0 578.4A2.7 2.7 0 0 1 105.7 576.9M106.4 579.1999999999999A2.7 2.7 0 0 1 101.7 580.6999999999999"/></g><path d="M107.10000000000001 575.4V578.4H104.10000000000001ZM100.3 582.1999999999999V579.1999999999999H103.3Z" fill="#323130"/><g stroke="#323130" stroke-width="1.1" fill="none" ><path d="M94.2 598.1H91.39999999999999V601.7M91.39999999999999 609.7V613.3000000000001H94.2M103.79999999999998 598.1H106.6V601.7M106.6 609.7V613.3000000000001H103.79999999999998"/></g><g stroke="#323130" stroke-width="1.1" fill="none" ><path d="M94.8 602.2V609.4000000000001M98.0 602.2V609.4000000000001M101.0 602.2V609.4000000000001M104.1 602.2V609.4000000000001"/></g><g stroke="#a19f9d" stroke-width="1.1" fill="none" ><path d="M74.6 635.6L79.0 640.0L83.39999999999999 635.6"/></g><g stroke="#323130" stroke-width="1.1" fill="none" stroke-linejoin="round"><path d="M98.39999999999999 645.4H92.39999999999999V630.9H100.0L103.8 634.6999999999999V636.6M100.0 630.9V634.6999999999999H103.8"/></g><g stroke="#323130" stroke-width="0.9" fill="none" ><path d="M94.6 637.1999999999999H100.6M94.6 639.6999999999999H99.2M94.6 642.1999999999999H97.39999999999999"/></g><g stroke="#2fa7a0" stroke-width="2.6" fill="none" stroke-linecap="round"><path d="M106.2 638.0L101.0 643.4"/></g><path d="M98.39999999999999 645.6L99.2 642.1999999999999L101.8 644.8Z" fill="#2fa7a0"/><g stroke="#a19f9d" stroke-width="1.1" fill="none" ><path d="M94.5 667.8L98.9 672.1999999999999L103.3 667.8"/></g><rect x="111.2" y="664.6" width="15" height="10.8" fill="#faf9f8" stroke="#323130" stroke-width="1.1"/><rect x="113.60000000000001" y="666.9" width="10.9" height="4.6" fill="none" stroke="#979593" stroke-width="1"/><path d="M142.2 697.4H133.7V707.4H144.79999999999998V700.5" fill="#fbfbfa" stroke="#323130" stroke-width="1.1"/><g stroke="#2fa7a0" stroke-width="2.3" fill="none" stroke-linecap="round"><path d="M145.79999999999998 695.3L137.6 703.3"/></g><g stroke="#d4f0ec" stroke-width="0.7" fill="none" stroke-linecap="round"><path d="M145.5 695.6L138.39999999999998 702.5"/></g><path d="M135.39999999999998 705.8L136.39999999999998 702.1L139.0 704.6999999999999Z" fill="#2fa7a0"/><rect x="131.2" y="730.8" width="9.8" height="6.4" fill="none" stroke="#323130" stroke-width="1.1"/><rect x="132.89999999999998" y="732.7" width="5.6" height="2.6" fill="#1d8a86"/><g stroke="#323130" stroke-width="1" fill="none" ><path d="M141.89999999999998 728.6Q143.39999999999998 728.6 143.39999999999998 730V738Q143.39999999999998 739.4 141.89999999999998 739.4M144.89999999999998 728.6Q143.39999999999998 728.6 143.39999999999998 730M143.39999999999998 738Q143.39999999999998 739.4 144.89999999999998 739.4"/></g><g stroke="#323130" stroke-width="1" fill="none" ><path d="M144.7 730.8H146.29999999999998V737.2H144.7"/></g><path d="M142.2 761.4H133.7V771.4H144.79999999999998V764.5" fill="#fbfbfa" stroke="#323130" stroke-width="1.1"/><g stroke="#2fa7a0" stroke-width="2.3" fill="none" stroke-linecap="round"><path d="M145.79999999999998 759.3L137.6 767.3"/></g><g stroke="#d4f0ec" stroke-width="0.7" fill="none" stroke-linecap="round"><path d="M145.5 759.6L138.39999999999998 766.5"/></g><path d="M135.39999999999998 769.8L136.39999999999998 766.1L139.0 768.6999999999999Z" fill="#2fa7a0"/><g stroke="#a19f9d" stroke-width="1.1" fill="none" ><path d="M94.5 795.8L98.9 800.1999999999999L103.3 795.8"/></g><rect x="111.2" y="792.6" width="15" height="10.8" fill="#faf9f8" stroke="#323130" stroke-width="1.1"/><rect x="113.60000000000001" y="794.9" width="10.9" height="4.6" fill="none" stroke="#979593" stroke-width="1"/><path d="M142.2 825.4H133.7V835.4H144.79999999999998V828.5" fill="#fbfbfa" stroke="#323130" stroke-width="1.1"/><g stroke="#2fa7a0" stroke-width="2.3" fill="none" stroke-linecap="round"><path d="M145.79999999999998 823.3L137.6 831.3"/></g><g stroke="#d4f0ec" stroke-width="0.7" fill="none" stroke-linecap="round"><path d="M145.5 823.6L138.39999999999998 830.5"/></g><path d="M135.39999999999998 833.8L136.39999999999998 830.1L139.0 832.6999999999999Z" fill="#2fa7a0"/><path d="M142.2 857.4H133.7V867.4H144.79999999999998V860.5" fill="#fbfbfa" stroke="#323130" stroke-width="1.1"/><g stroke="#2fa7a0" stroke-width="2.3" fill="none" stroke-linecap="round"><path d="M145.79999999999998 855.3L137.6 863.3"/></g><g stroke="#d4f0ec" stroke-width="0.7" fill="none" stroke-linecap="round"><path d="M145.5 855.6L138.39999999999998 862.5"/></g><path d="M135.39999999999998 865.8L136.39999999999998 862.1L139.0 864.6999999999999Z" fill="#2fa7a0"/><rect x="131.2" y="890.8" width="9.8" height="6.4" fill="none" stroke="#323130" stroke-width="1.1"/><rect x="132.89999999999998" y="892.7" width="5.6" height="2.6" fill="#1d8a86"/><g stroke="#323130" stroke-width="1" fill="none" ><path d="M141.89999999999998 888.6Q143.39999999999998 888.6 143.39999999999998 890V898Q143.39999999999998 899.4 141.89999999999998 899.4M144.89999999999998 888.6Q143.39999999999998 888.6 143.39999999999998 890M143.39999999999998 898Q143.39999999999998 899.4 144.89999999999998 899.4"/></g><g stroke="#323130" stroke-width="1" fill="none" ><path d="M144.7 890.8H146.29999999999998V897.2H144.7"/></g><g stroke="#fff" stroke-width="2.3" fill="none" stroke-linejoin="miter"><path d="M837.1 161.6Q837.1 160.4 838.3 160.4H861.9Q863.1 160.4 863.1 161.6V185.7Q863.1 186.9 861.9 186.9H840.6L837.1 183.4ZM841.4 160.4V172.3H858.9V160.4M843.2 186.9V179H855.1V186.9M846.7 182V186.9"/></g><g stroke="#fff" stroke-width="1.9" fill="none" ><path d="M638 762.4H646.3L648.2 759.8H654.6L656.5 762.4H664.8V782.1H638Z"/><circle cx="651.4" cy="771.9" r="5.9"/></g><circle cx="641.9" cy="765.8" r="1" fill="#fff"/><rect x="346.5" y="885.6" width="15" height="10.8" rx="0.9" fill="#fff" stroke="#323130" stroke-width="1.1"/><g stroke="#8a8886" stroke-width="1.1" fill="none" ><path d="M451 888L457 894L463 888"/></g><g stroke="#323130" stroke-width="1.2" fill="none" ><path d="M1035.8 885V890.5M1035.8 885H1030.3M1035.8 885L1025.2 895.6M1025.2 895.6V890.1M1025.2 895.6H1030.7"/></g></svg>
</body></html>
